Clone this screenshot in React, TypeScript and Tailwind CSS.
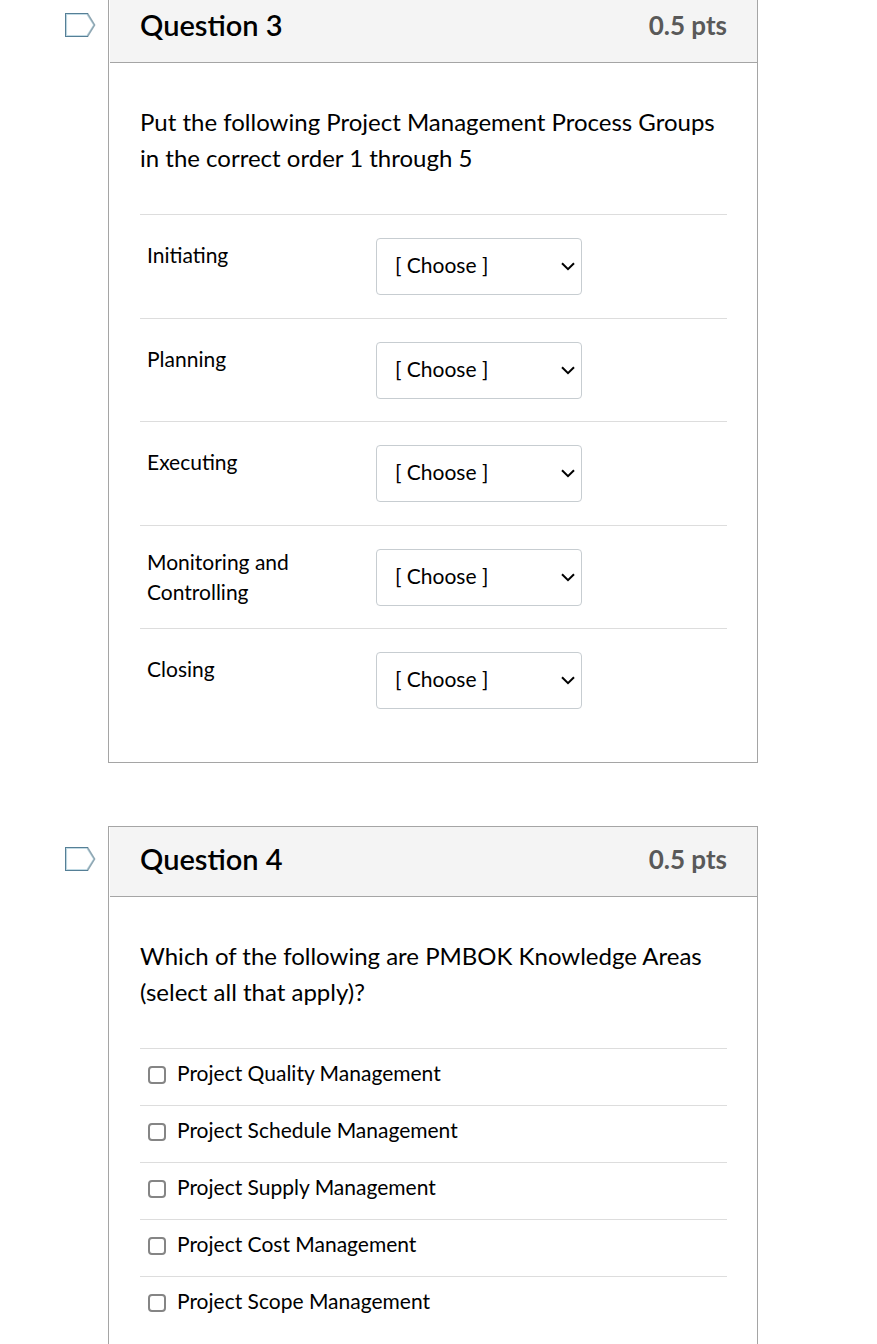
import React from "react";

const processGroups = ["Initiating", "Planning", "Executing", "Monitoring and Controlling", "Closing"];

const knowledgeAreas = [
  "Project Quality Management",
  "Project Schedule Management",
  "Project Supply Management",
  "Project Cost Management",
  "Project Scope Management",
];

function FlagButton({ label }: { label: string }) {
  return (
    <button type="button" aria-label={label} aria-pressed="false" className="mt-[21px] h-6 w-[31px] shrink-0">
      <svg viewBox="0 0 31 24" className="block h-6 w-[31px]" fill="none">
        <path d="M1.5 1.5H22L28.7 12L22 22.5H1.5Z" stroke="#c3dbe5" strokeWidth="1.2" />
        <path d="M22.5 0.5L29.6 12L22.5 23.5" stroke="#8fa7b3" strokeWidth="1.5" />
        <path d="M23 0.5H0.5V23.5H23" stroke="#557f96" strokeWidth="1.1" />
      </svg>
    </button>
  );
}

function Question({
  title,
  points,
  prompt,
  children,
}: {
  title: string;
  points: string;
  prompt: string;
  children: React.ReactNode;
}) {
  return (
    <div className="flex items-start gap-3">
      <FlagButton label={`Flag ${title}`} />
      <section className="min-w-0 flex-1 border border-[#a5a5a5]">
        <header className="ml-px flex h-[70px] items-center justify-between border-b border-[#a5a5a5] bg-[#f4f4f4] pr-[30px] pb-[5px] pl-[30px]">
          <h2 className="text-[29px] leading-9 font-semibold text-black">{title}</h2>
          <span className="text-[26px] leading-9 font-bold text-[#595959]">{points}</span>
        </header>
        <div className="pt-[41px] pr-[30px] pb-[30px] pl-[31px]">
          <p className="pb-[38px] text-[24px] leading-9">{prompt}</p>
          {children}
        </div>
      </section>
    </div>
  );
}

function MatchRow({ label, id }: { label: string; id: string }) {
  return (
    <div className="flex items-start border-t border-[#dddddd] px-[7px] pt-[21px] pb-5">
      <div className="flex min-h-[38px] w-[229px] shrink-0 items-center pr-12">
        <label htmlFor={id} className="text-[21px] leading-[30px]">
          {label}
        </label>
      </div>
      <div className="relative mt-0.5 w-[206px]">
        <select
          id={id}
          className="block h-[57px] w-full appearance-none rounded-[4px] border border-[#c7cdd1] bg-white pr-9 pb-[3px] pl-[18px] text-[21px] leading-[30px] text-black"
        >
          <option>[ Choose ]</option>
          <option>1</option>
          <option>2</option>
          <option>3</option>
          <option>4</option>
          <option>5</option>
        </select>
        <svg
          viewBox="0 0 14 9"
          className="pointer-events-none absolute top-6 right-[7px] h-[9px] w-[14px]"
          fill="none"
          stroke="#000"
          strokeWidth="2"
        >
          <path d="M1 1.2L7 7.2L13 1.2" />
        </svg>
      </div>
    </div>
  );
}

function CheckRow({ label }: { label: string }) {
  return (
    <label className="flex h-[57px] items-start gap-[11px] border-t border-[#dddddd] px-2 pt-[9px] text-[21px] leading-[30px]">
      <input
        type="checkbox"
        className="mt-2 h-[18px] w-[18px] shrink-0 appearance-none rounded-[4px] border-2 border-[#858585] bg-white checked:bg-[#0374b5]"
      />
      {label}
    </label>
  );
}

export default function App() {
  return (
    <div className="h-screen overflow-hidden bg-white font-['Lato',sans-serif] text-black">
      <main className="-mt-2 mr-[119px] ml-[65px] flex flex-col gap-[63px]">
        <Question
          title="Question 3"
          points="0.5 pts"
          prompt="Put the following Project Management Process Groups in the correct order 1 through 5"
        >
          <div className="grid min-h-[518px] auto-rows-fr">
            {processGroups.map((group, i) => (
              <MatchRow key={group} label={group} id={`match-${i}`} />
            ))}
          </div>
        </Question>
        <Question
          title="Question 4"
          points="0.5 pts"
          prompt="Which of the following are PMBOK Knowledge Areas (select all that apply)?"
        >
          <div>
            {knowledgeAreas.map((area) => (
              <CheckRow key={area} label={area} />
            ))}
          </div>
        </Question>
      </main>
    </div>
  );
}
